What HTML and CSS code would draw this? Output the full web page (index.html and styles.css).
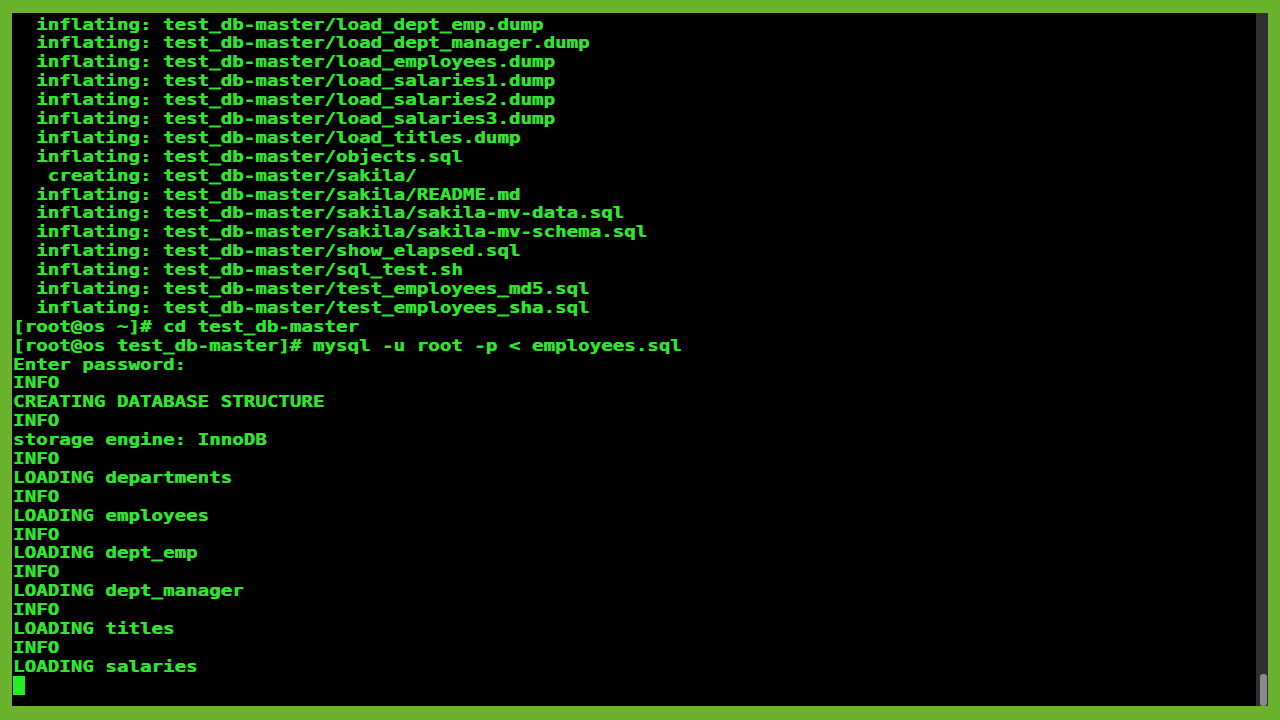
FILE: index.html
```html
<!DOCTYPE html>
<html lang="en">
<head>
<meta charset="utf-8">
<title>Terminal</title>
<link rel="stylesheet" href="styles.css">
</head>
<body>
<div class="frame">
  <div class="terminal">
    <div class="screen">
<pre class="output">  inflating: test_db-master/load_dept_emp.dump
  inflating: test_db-master/load_dept_manager.dump
  inflating: test_db-master/load_employees.dump
  inflating: test_db-master/load_salaries1.dump
  inflating: test_db-master/load_salaries2.dump
  inflating: test_db-master/load_salaries3.dump
  inflating: test_db-master/load_titles.dump
  inflating: test_db-master/objects.sql
   creating: test_db-master/sakila/
  inflating: test_db-master/sakila/README.md
  inflating: test_db-master/sakila/sakila-mv-data.sql
  inflating: test_db-master/sakila/sakila-mv-schema.sql
  inflating: test_db-master/show_elapsed.sql
  inflating: test_db-master/sql_test.sh
  inflating: test_db-master/test_employees_md5.sql
  inflating: test_db-master/test_employees_sha.sql
[root@os ~]# cd test_db-master
[root@os test_db-master]# mysql -u root -p &lt; employees.sql
Enter password:
INFO
CREATING DATABASE STRUCTURE
INFO
storage engine: InnoDB
INFO
LOADING departments
INFO
LOADING employees
INFO
LOADING dept_emp
INFO
LOADING dept_manager
INFO
LOADING titles
INFO
LOADING salaries
<span class="cursor"> </span></pre>
    </div>
    <div class="scrollbar"><div class="thumb"></div></div>
  </div>
</div>
</body>
</html>
```

FILE: styles.css
```css
html, body {
  margin: 0;
  padding: 0;
  background: #6bb22f;
  width: 1280px;
  height: 720px;
  overflow: hidden;
}

.frame {
  padding: 13px 12px 14px 12px;
  height: 720px;
  box-sizing: border-box;
}

.terminal {
  display: flex;
  height: 100%;
  background: #000;
}

.screen {
  flex: 1;
  overflow: hidden;
  background: #000;
  padding-top: 2.5px;
  padding-left: 1px;
}

.output {
  margin: 0;
  font-family: "DejaVu Sans Mono", "Liberation Mono", monospace;
  font-weight: bold;
  font-size: 16px;
  line-height: 18.886px;
  color: #2fe62f;
  white-space: pre;
  transform: scaleX(1.197);
  transform-origin: 0 0;
  text-shadow: 0.3px 0 0 #2fe62f;
}

.cursor {
  background: #22f022;
  text-shadow: none;
}

.scrollbar {
  width: 11px;
  background: #2f2f34;
  display: flex;
  flex-direction: column;
  justify-content: flex-end;
  align-items: flex-end;
  padding-right: 1px;
}

.thumb {
  width: 7px;
  height: 32px;
  background: #8a8a8a;
  border-radius: 3px;
}
```
